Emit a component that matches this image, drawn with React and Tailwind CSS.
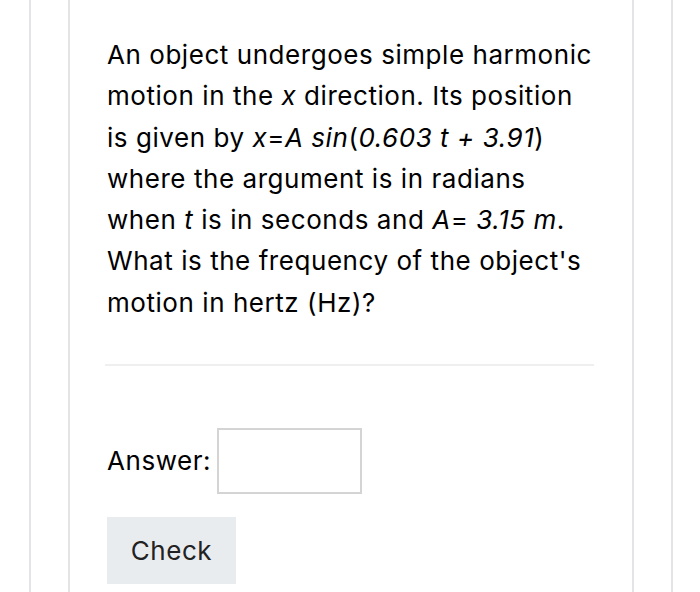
export default function App() {
  return (
    <div className="w-[700px] h-[592px] bg-white overflow-hidden flex" style={{ fontFamily: 'Inter, "Noto Sans", sans-serif' }}>
      <div className="w-[29px] shrink-0" />
      <div className="w-[2px] shrink-0 bg-[#e4e4e7]" />
      <div className="w-[37px] shrink-0" />
      <div className="w-[2px] shrink-0 bg-[#e4e4e7]" />
      <div className="flex-1 pl-[37px] pr-[30px] pt-[34px] text-black text-[26px] leading-[41.3px] tracking-[0.55px]">
        <p className="whitespace-nowrap">
          An object undergoes simple harmonic<br />
          motion in the <i>x</i> direction. Its position<br />
          is given by <i>x</i>=<i>A sin</i>(<i>0.603 t + 3.91</i>)<br />
          where the argument is in radians<br />
          when <i>t</i> is in seconds and <i>A</i>= <i>3.15 m</i>.<br />
          What is the frequency of the object's<br />
          motion in hertz (Hz)?
        </p>
        <div className="mt-[41px] h-[2px] bg-[#efefef] ml-[-2px] mr-[8px]" />
        <div className="mt-[62px] flex items-center gap-[6px]">
          <span>Answer:</span>
          <div className="w-[145px] h-[66px] border-2 border-[#d4d4d4]" />
        </div>
        <button className="mt-[23px] w-[129px] h-[67px] bg-[#e9ecef] text-[#222] text-[26px] tracking-[0.55px]">Check</button>
      </div>
      <div className="w-[2px] shrink-0 bg-[#e4e4e7]" />
      <div className="w-[37px] shrink-0" />
      <div className="w-[2px] shrink-0 bg-[#e4e4e7]" />
      <div className="w-[27px] shrink-0" />
    </div>
  );
}
